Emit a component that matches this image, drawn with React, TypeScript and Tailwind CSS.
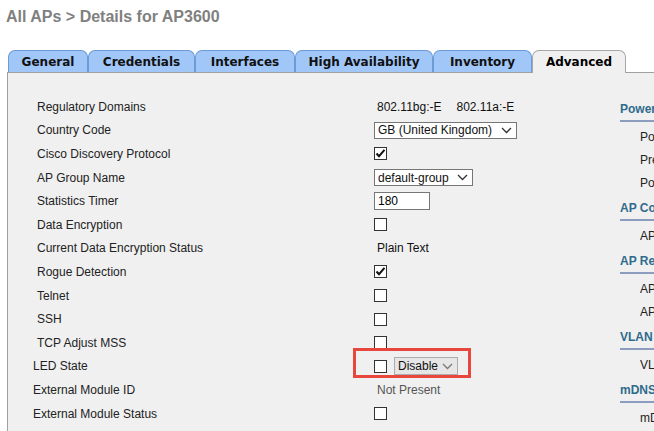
import React from 'react';

const tabs = [
  { label: 'General', w: 'w-[80px]' },
  { label: 'Credentials', w: 'w-[107px]' },
  { label: 'Interfaces', w: 'w-[100px]' },
  { label: 'High Availability', w: 'w-[138px]' },
  { label: 'Inventory', w: 'w-[99px]' },
  { label: 'Advanced', w: 'w-[94px]', active: true },
];

const sections = [
  { title: 'Power Over Ethernet Settings', items: ['Power Type/Mode', 'Pre-standard 802.3af switches', 'Power Injector State'] },
  { title: 'AP Core Dump', items: ['AP Core Dump'] },
  { title: 'AP Retransmit Config Parameters', items: ['AP Retransmit Count', 'AP Retransmit Interval'] },
  { title: 'VLAN Tagging', items: ['VLAN Tagged'] },
  { title: 'mDNS', items: ['mDNS Snooping'] },
];

function Chevron({ color = '#333' }: { color?: string }) {
  return (
    <svg width="11" height="7" viewBox="0 0 11 7" className="shrink-0">
      <path d="M1 1 L5.5 5.5 L10 1" fill="none" stroke={color} strokeWidth="1.3" />
    </svg>
  );
}

function Checkbox({ checked }: { checked?: boolean }) {
  return (
    <div className="w-[13px] h-[13px] border border-[#333] bg-white flex items-center justify-center">
      {checked && (
        <svg width="11" height="11" viewBox="0 0 11 11">
          <path d="M1.5 5.5 L4 8.2 L9.5 1.8" fill="none" stroke="#111" strokeWidth="2" />
        </svg>
      )}
    </div>
  );
}

function Select({ value, w }: { value: string; w: string }) {
  return (
    <div className={`${w} h-[17px] border border-[#767676] bg-white flex items-center justify-between pl-[3px] pr-[4px] text-[12px] text-[#111]`}>
      <span>{value}</span>
      <Chevron />
    </div>
  );
}

type Row = { label: string; indent?: boolean; value: React.ReactNode };

const rows: Row[] = [
  {
    label: 'Regulatory Domains',
    indent: true,
    value: (
      <div className="pl-[3px] flex gap-[15px] text-[#111]">
        <span>802.11bg:-E</span>
        <span>802.11a:-E</span>
      </div>
    ),
  },
  { label: 'Country Code', indent: true, value: <Select value="GB (United Kingdom)" w="w-[143px]" /> },
  { label: 'Cisco Discovery Protocol', indent: true, value: <Checkbox checked /> },
  { label: 'AP Group Name', indent: true, value: <Select value="default-group" w="w-[99px]" /> },
  {
    label: 'Statistics Timer',
    indent: true,
    value: <div className="w-[56px] h-[18px] border border-[#767676] bg-white pl-[3px] leading-[16px] text-[12px]">180</div>,
  },
  { label: 'Data Encryption', indent: true, value: <Checkbox /> },
  { label: 'Current Data Encryption Status', indent: true, value: <span className="pl-[3px] text-[#111]">Plain Text</span> },
  { label: 'Rogue Detection', indent: true, value: <Checkbox checked /> },
  { label: 'Telnet', indent: true, value: <Checkbox /> },
  { label: 'SSH', indent: true, value: <Checkbox /> },
  { label: 'TCP Adjust MSS', indent: true, value: <Checkbox /> },
  {
    label: 'LED State',
    value: (
      <div className="flex items-center gap-[7px]">
        <Checkbox />
        <div className="w-[64px] h-[18px] border border-[#adadad] bg-[#e6e6e6] flex items-center justify-between pl-[3px] pr-[4px] text-[12px] text-[#111]">
          <span>Disable</span>
          <Chevron color="#777" />
        </div>
      </div>
    ),
  },
  { label: 'External Module ID', value: <span className="pl-[3px] text-[#555]">Not Present</span> },
  { label: 'External Module Status', value: <Checkbox /> },
];

export default function App() {
  return (
    <div className="w-[654px] h-[431px] overflow-hidden bg-white relative font-['Liberation_Sans',Arial,sans-serif]">
      {/* Title */}
      <div className="pl-[6px] pt-[8px] text-[16px] leading-[18px] font-bold text-[#808080] whitespace-nowrap">
        All APs &gt; Details for AP3600
      </div>

      {/* Tabs */}
      <div className="mt-[24px] pl-[8px] flex items-end h-[22px] font-['DejaVu_Sans',Verdana,sans-serif] text-[12px] font-bold">
        {tabs.map((t) =>
          t.active ? (
            <div
              key={t.label}
              className={`${t.w} h-[23px] -mb-px relative z-10 bg-[#f0f0f0] border border-b-0 border-[#a8a8a8] rounded-t-[7px] flex items-center justify-center text-black`}
            >
              {t.label}
            </div>
          ) : (
            <div
              key={t.label}
              className={`${t.w} h-[22px] bg-[#a1c6f8] border border-b-0 border-[#6d9bd8] rounded-t-[7px] flex items-center justify-center text-[#111]`}
            >
              {t.label}
            </div>
          )
        )}
      </div>

      {/* Panel */}
      <div className="ml-[7px] w-[700px] h-[400px] border-l border-t border-[#a0a0a0] bg-[#f0f0f0] flex text-[12px]">
        <div className="w-[612px] shrink-0 pt-[22px]">
          {rows.map((r) => (
            <div key={r.label} className="h-[23.6px] flex items-center">
              <div className={`w-[366px] shrink-0 text-[#222] ${r.indent ? 'pl-[29px]' : 'pl-[25px]'}`}>{r.label}</div>
              <div className="flex items-center">{r.value}</div>
            </div>
          ))}
        </div>

        <div className="w-[260px] shrink-0 pt-[26px] whitespace-nowrap">
          {sections.map((s, i) => (
            <div key={s.title} className={i > 0 ? 'mt-[3px]' : ''}>
              <div className="h-[23px] leading-[20px] font-bold text-[#2f6b8d] border-b-2 border-[#8d9dc0]">{s.title}</div>
              <div className="mt-[4px]">
                {s.items.map((it) => (
                  <div key={it} className="h-[23px] leading-[23px] pl-[20px] text-[#222]">
                    {it}
                  </div>
                ))}
              </div>
            </div>
          ))}
        </div>
      </div>

      {/* Highlight box around LED State controls */}
      <div className="absolute left-[353px] top-[348px] w-[118px] h-[30px] border-[3px] border-[#e8473d]" />
    </div>
  );
}
